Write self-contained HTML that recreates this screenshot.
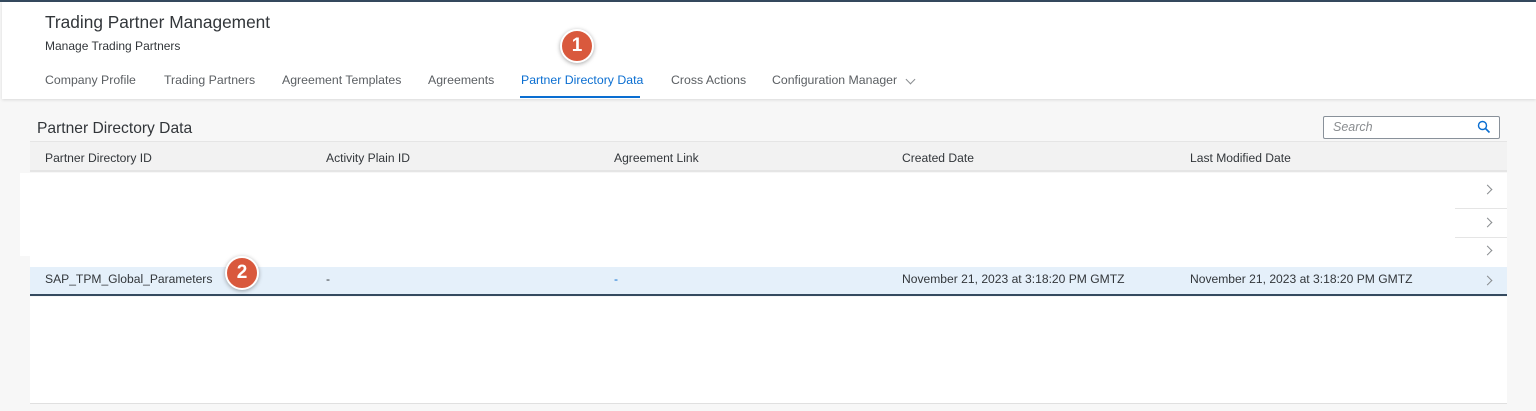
<!DOCTYPE html>
<html><head><meta charset="utf-8"><style>
*{margin:0;padding:0;box-sizing:border-box}
body{width:1536px;height:411px;background:#f7f7f7;font-family:"Liberation Sans",sans-serif;color:#32363a;position:relative;overflow:hidden}
.abs{position:absolute;white-space:nowrap}
.top{position:absolute;left:0;top:0;width:1536px;height:2px;background:#354a5f}
.hdr{position:absolute;left:2px;top:2px;width:1534px;height:97px;background:#fff;box-shadow:0 1px 3px rgba(0,0,0,.12)}
.tab{font-size:12.3px;color:#5a5e62;top:73px}
.badge{position:absolute;width:34px;height:34px;border-radius:50%;background:#d9593d;border:2px solid #fff;box-shadow:0 1px 4px rgba(0,0,0,.35);color:#fff;font-weight:bold;font-size:19px;text-align:center;line-height:30px}
.th{font-size:12.1px;color:#32363a;top:151px}
.td{font-size:12.1px;color:#32363a;top:272px}
.chev{position:absolute;width:7px;height:7px;border-right:1px solid #8a8d90;border-top:1px solid #8a8d90;transform:rotate(45deg)}
</style></head><body>
<div class="top"></div>
<div class="hdr"></div>
<div class="abs" style="left:45px;top:12px;font-size:17.3px;color:#32363a">Trading Partner Management</div>
<div class="abs" style="left:45px;top:39px;font-size:12px;color:#32363a">Manage Trading Partners</div>
<div class="abs tab" style="left:45px">Company Profile</div>
<div class="abs tab" style="left:164px">Trading Partners</div>
<div class="abs tab" style="left:282px">Agreement Templates</div>
<div class="abs tab" style="left:428px">Agreements</div>
<div class="abs tab" style="left:521px;color:#0a6ed1">Partner Directory Data</div>
<div style="position:absolute;left:520px;top:96px;width:120px;height:2px;background:#0a6ed1"></div>
<div class="abs tab" style="left:671px">Cross Actions</div>
<div class="abs tab" style="left:772px">Configuration Manager</div>
<div class="chev" style="left:907px;top:76px;transform:rotate(135deg)"></div>
<div class="badge" style="left:560px;top:29px">1</div>

<div class="abs" style="left:37px;top:120px;font-size:15.6px;color:#32363a">Partner Directory Data</div>
<div style="position:absolute;left:1323px;top:116px;width:177px;height:23px;border:1px solid #89919a;background:#fff;border-radius:2px"></div>
<div class="abs" style="left:1333px;top:120px;font-size:12.5px;font-style:italic;color:#8a8d90">Search</div>
<svg style="position:absolute;left:1477px;top:120px" width="14" height="14" viewBox="0 0 14 14"><circle cx="5.5" cy="5.5" r="4" fill="none" stroke="#0a6ed1" stroke-width="1.4"/><path d="M8.5 8.5L12.5 12.5" stroke="#0a6ed1" stroke-width="1.6"/></svg>

<div style="position:absolute;left:30px;top:141px;width:1477px;height:31px;background:#f2f2f2;border-top:1px solid #e5e5e5;border-bottom:2px solid #e5e5e5"></div>
<div class="abs th" style="left:45px">Partner Directory ID</div>
<div class="abs th" style="left:326px">Activity Plain ID</div>
<div class="abs th" style="left:614px">Agreement Link</div>
<div class="abs th" style="left:902px">Created Date</div>
<div class="abs th" style="left:1190px">Last Modified Date</div>

<div style="position:absolute;left:20px;top:173px;width:1487px;height:83px;background:#fff"></div>
<div style="position:absolute;left:30px;top:256px;width:1477px;height:11px;background:#fff"></div>
<div style="position:absolute;left:1455px;top:208px;width:52px;height:1px;background:#e5e5e5"></div>
<div style="position:absolute;left:1455px;top:237px;width:52px;height:1px;background:#e5e5e5"></div>
<div style="position:absolute;left:30px;top:267px;width:1477px;height:29px;background:#e5f0fa;border-bottom:2px solid #354a5f"></div>
<div class="abs td" style="left:45px">SAP_TPM_Global_Parameters</div>
<div class="abs td" style="left:326px">-</div>
<div class="abs td" style="left:614px;color:#0a6ed1">-</div>
<div class="abs td" style="left:902px">November 21, 2023 at 3:18:20 PM GMTZ</div>
<div class="abs td" style="left:1190px">November 21, 2023 at 3:18:20 PM GMTZ</div>
<div class="badge" style="left:225px;top:256px">2</div>
<div style="position:absolute;left:30px;top:297px;width:1477px;height:107px;background:#fff;border-bottom:1px solid #e0e0e0"></div>
<div class="chev" style="left:1484px;top:186px"></div>
<div class="chev" style="left:1484px;top:219px"></div>
<div class="chev" style="left:1484px;top:247px"></div>
<div class="chev" style="left:1484px;top:277px"></div>
</body></html>
